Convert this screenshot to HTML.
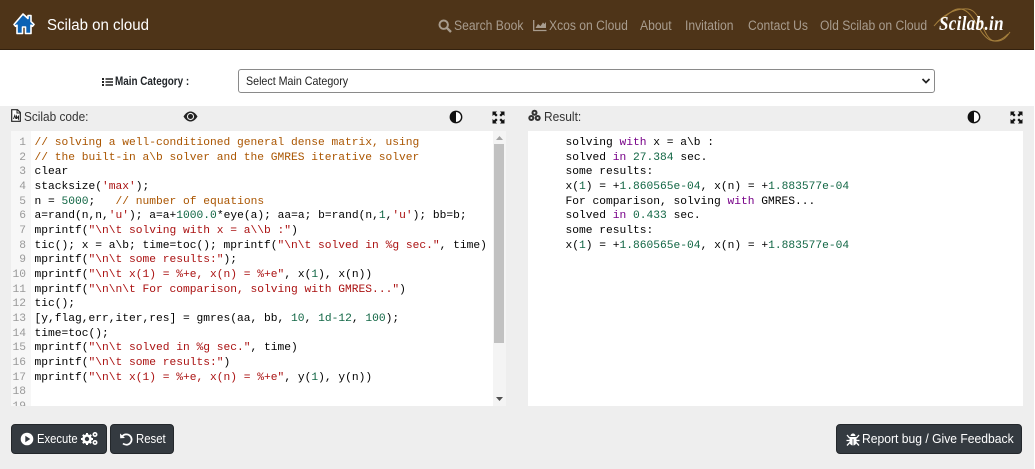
<!DOCTYPE html>
<html><head><meta charset="utf-8">
<style>
html,body{margin:0;padding:0;background:#fff}
body{width:1035px;height:469px;overflow:hidden;position:relative;font-family:"Liberation Sans",sans-serif}
.a{position:absolute;white-space:pre}
#hdr{left:0;top:0;width:1034px;height:49px;background:#4e3418;border-bottom:1px solid #33210e}
#bg{left:0;top:106px;width:1034px;height:363px;background:#eee}
.nav{top:18px;font-size:13.4px;line-height:16px;color:#a89c8e;transform:scaleX(.905);transform-origin:0 0}
.lbl{top:109px;font-size:13px;line-height:16px;color:#333;transform-origin:0 0}
.panel{top:131px;height:275px;background:#fff;overflow:hidden}
.code{font-family:"Liberation Mono",monospace;font-size:11.25px;line-height:14.67px;color:#000;margin:0}
.gut{color:#999;text-align:right}
.c{color:#a50}.s{color:#a11}.n{color:#164}.k{color:#708}
.btn{top:424px;height:30px;background:#343a40;border:1px solid #23272b;box-sizing:border-box;border-radius:4px;color:#fff;font-size:13px;line-height:28px}
svg{position:absolute;display:block}
</style></head><body>
<div class="a" id="hdr"></div>
<div class="a" id="bg"></div>

<svg style="left:11px;top:12px" width="24" height="24" viewBox="0 0 24 24"><path d="M12 2.5 L17 7V4h3v6l3 3-1.500 1.800-1.500-1.100V22h-5.500v-6.500h-3V22H6V13.700l-1.500 1.100L3 13Z" transform="translate(0 -.5)" fill="#0b62b4" stroke="#fff" stroke-width="1.600" stroke-linejoin="round"/></svg>
<div class="a" style="left:47px;top:16px;font-size:15.500px;line-height:19px;color:#fff;transform:scaleX(.97);transform-origin:0 0">Scilab on cloud</div>

<svg style="left:438px;top:19px" width="14" height="14" viewBox="0 0 14 14"><circle cx="5.700" cy="5.700" r="4.200" fill="none" stroke="#a89c8e" stroke-width="2"/><path d="M8.800 8.800 13 13" stroke="#a89c8e" stroke-width="2.400"/></svg>
<div class="a nav" style="left:454px">Search Book</div>
<svg style="left:533px;top:19px" width="14" height="13" viewBox="0 0 14 13"><path d="M.7 1v10.500H13.500" fill="none" stroke="#a89c8e" stroke-width="1.300"/><path d="M2.500 9 5 5l2.500 2L10 3.500 11.500 5 13 3v6Z" fill="#a89c8e"/></svg>
<div class="a nav" style="left:549px">Xcos on Cloud</div>
<div class="a nav" style="left:640px">About</div>
<div class="a nav" style="left:685px">Invitation</div>
<div class="a nav" style="left:748px">Contact Us</div>
<div class="a nav" style="left:820px">Old Scilab on Cloud</div>

<svg style="left:932px;top:0" width="84" height="46" viewBox="0 0 84 46"><path d="M2 26C10 16 22 8 36 9 50 11 50 38 62 41 70 42 74 38 78 32" fill="none" stroke="#a57f3c" stroke-width="1"/><path d="M11 19C18 12 23 8 29 9 42 11 46 34 58 40 66 43 72 38 76 34" fill="none" stroke="#a57f3c" stroke-width="1"/></svg>
<div class="a" style="left:939px;top:14px;font-family:'Liberation Serif',serif;font-style:italic;font-weight:bold;font-size:19.500px;line-height:22px;color:#fff;letter-spacing:.4px;transform:scaleX(.87);transform-origin:0 0">Scilab.in</div>

<svg style="left:102px;top:77px" width="11" height="10" viewBox="0 0 11 10"><path d="M0 1h2v2H0zM0 4h2v2H0zM0 7h2v2H0zM3.500 1.300H11v1.400H3.500zM3.500 4.300H11v1.400H3.500zM3.500 7.300H11v1.400H3.500z" fill="#222"/></svg>
<div class="a" style="left:115px;top:74px;font-size:11.500px;line-height:16px;font-weight:bold;color:#212529;transform:scaleX(.86);transform-origin:0 0">Main Category :</div>
<div class="a" style="left:238px;top:69px;width:697px;height:24px;box-sizing:border-box;border:1px solid #8a8a8a;border-radius:3px;background:#fff"></div>
<div class="a" style="left:245.500px;top:73px;font-size:12px;line-height:16px;color:#222;transform:scaleX(.89);transform-origin:0 0">Select Main Category</div>
<svg style="left:921px;top:77px" width="10" height="8" viewBox="0 0 10 8"><path d="M1.500 2 5 5.500 8.500 2" fill="none" stroke="#222" stroke-width="1.700"/></svg>

<svg style="left:11px;top:109px" width="10" height="13" viewBox="0 0 10 13"><path d="M.7.700H6.500L9.300 3.500V12.300H.7Z" fill="#fff" stroke="#222" stroke-width="1.200"/><path d="M6 1v3h3" fill="none" stroke="#222"/><path d="M2.500 10 3.800 6.500 5 10M5.500 10V7l2 3V6.500" fill="none" stroke="#222"/></svg>
<div class="a lbl" style="left:23.500px;transform:scaleX(.91)">Scilab code:</div>
<svg style="left:183px;top:111px" width="15" height="11" viewBox="0 0 15 11"><path d="M.5 5.500C3 1.500 5.500.5 7.500.5s4.500 1 7 5c-2.500 4-5 5-7 5s-4.500-1-7-5Z" fill="#222"/><circle cx="7.500" cy="5.500" r="3.600" fill="#eee"/><circle cx="7.500" cy="5.500" r="2.500" fill="#222"/></svg>
<svg style="left:449px;top:110px" width="14" height="14" viewBox="0 0 14 14"><circle cx="7" cy="7" r="5.700" fill="#fff" stroke="#111" stroke-width="1.400"/><path d="M7 1a6 6 0 0 0 0 12Z" fill="#111"/></svg>
<svg style="left:492px;top:111px" width="13" height="13" viewBox="0 0 13 13"><path fill="#111" d="M.5.500h4.500L3.600 2l2 2-1.600 1.600-2-2L.5 5zM12.500.500V5L11 3.600l-2 2L7.400 4l2-2L8 .500zM.5 12.500V8L2 9.400l2-2L5.600 9l-2 2L5 12.500zM12.500 12.500H8L9.400 11l-2-2L9 7.400l2 2L12.500 8z"/></svg>

<svg style="left:528px;top:109px" width="13" height="13" viewBox="0 0 13 13"><circle cx="6.500" cy="3.800" r="3" fill="#333"/><circle cx="3.300" cy="9" r="3" fill="#333"/><circle cx="9.700" cy="9" r="3" fill="#333"/><circle cx="6.500" cy="3.800" r="1" fill="#eee"/><circle cx="3.300" cy="9" r="1" fill="#eee"/><circle cx="9.700" cy="9" r="1" fill="#eee"/></svg>
<div class="a lbl" style="left:544px;transform:scaleX(.92)">Result:</div>
<svg style="left:967px;top:110px" width="14" height="14" viewBox="0 0 14 14"><circle cx="7" cy="7" r="5.700" fill="#fff" stroke="#111" stroke-width="1.400"/><path d="M7 1a6 6 0 0 0 0 12Z" fill="#111"/></svg>
<svg style="left:1010px;top:111px" width="13" height="13" viewBox="0 0 13 13"><path fill="#111" d="M.5.500h4.500L3.600 2l2 2-1.600 1.600-2-2L.5 5zM12.500.500V5L11 3.600l-2 2L7.400 4l2-2L8 .500zM.5 12.500V8L2 9.400l2-2L5.600 9l-2 2L5 12.500zM12.500 12.500H8L9.400 11l-2-2L9 7.400l2 2L12.500 8z"/></svg>

<div class="a panel" style="left:11px;width:495px">
<div class="a" style="left:0;top:0;width:20px;height:275px;background:#f7f7f7"></div>
<pre class="a code gut" style="left:0;top:5px;width:15px">1
2
3
4
5
6
7
8
9
10
11
12
13
14
15
16
17
18
19</pre>
<pre class="a code" style="left:23.500px;top:5px"><span class="c">// solving a well-conditioned general dense matrix, using</span>
<span class="c">// the built-in a\b solver and the GMRES iterative solver</span>
clear
stacksize(<span class="s">'max'</span>);
n = <span class="n">5000</span>;   <span class="c">// number of equations</span>
a=rand(n,n,<span class="s">'u'</span>); a=a+<span class="n">1000.0</span>*eye(a); aa=a; b=rand(n,<span class="n">1</span>,<span class="s">'u'</span>); bb=b;
mprintf(<span class="s">"\n\t solving with x = a\\b :"</span>)
tic(); x = a\b; time=toc(); mprintf(<span class="s">"\n\t solved in %g sec."</span>, time)
mprintf(<span class="s">"\n\t some results:"</span>);
mprintf(<span class="s">"\n\t x(1) = %+e, x(n) = %+e"</span>, x(<span class="n">1</span>), x(n))
mprintf(<span class="s">"\n\n\t For comparison, solving with GMRES..."</span>)
tic();
[y,flag,err,iter,res] = gmres(aa, bb, <span class="n">10</span>, <span class="n">1d-12</span>, <span class="n">100</span>);
time=toc();
mprintf(<span class="s">"\n\t solved in %g sec."</span>, time)
mprintf(<span class="s">"\n\t some results:"</span>)
mprintf(<span class="s">"\n\t x(1) = %+e, x(n) = %+e"</span>, y(<span class="n">1</span>), y(n))</pre>
<div class="a" style="left:482px;top:0;width:13px;height:275px;background:#f4f4f4"></div>
<div class="a" style="left:483px;top:13px;width:10px;height:199px;background:#c1c1c1"></div>
<svg style="left:485px;top:5px" width="7" height="4" viewBox="0 0 7 4"><path d="M3.500 0 7 4H0Z" fill="#a3a3a3"/></svg>
<svg style="left:485px;top:266px" width="7" height="4" viewBox="0 0 7 4"><path d="M0 0H7L3.500 4Z" fill="#505050"/></svg>
</div>

<div class="a panel" style="left:528px;width:495px">
<pre class="a code" style="left:37.500px;top:5px">solving <span class="k">with</span> x = a\b :
solved <span class="k">in</span> <span class="n">27.384</span> sec.
some results:
x(<span class="n">1</span>) = +<span class="n">1.860565e-04</span>, x(n) = +<span class="n">1.883577e-04</span>
For comparison, solving <span class="k">with</span> GMRES...
solved <span class="k">in</span> <span class="n">0.433</span> sec.
some results:
x(<span class="n">1</span>) = +<span class="n">1.860565e-04</span>, x(n) = +<span class="n">1.883577e-04</span></pre>
</div>

<div class="a btn" style="left:11px;width:96px"></div>
<svg style="left:20px;top:432px" width="14" height="14" viewBox="0 0 14 14"><circle cx="7" cy="7" r="6.300" fill="#fff"/><path d="M5.300 3.800 10.300 7 5.300 10.200Z" fill="#343a40"/></svg>
<div class="a" style="left:37px;top:431px;font-size:12.500px;line-height:16px;color:#fff;transform:scaleX(.9);transform-origin:0 0">Execute</div>
<svg style="left:81px;top:431px" width="17" height="15" viewBox="0 0 17 15"><circle cx="6" cy="8" r="3.500" fill="none" stroke="#fff" stroke-width="2.600"/><path d="M6 2v2M6 12v2M0 8h2M10 8h2M1.800 3.800l1.400 1.400M8.800 10.800l1.400 1.400M1.800 12.200l1.400-1.400M8.800 5.200l1.400-1.400" stroke="#fff" stroke-width="2"/><circle cx="14" cy="3.500" r="1.700" fill="none" stroke="#fff" stroke-width="1.600"/><circle cx="14" cy="11.500" r="1.700" fill="none" stroke="#fff" stroke-width="1.600"/></svg>

<div class="a btn" style="left:110px;width:64px"></div>
<svg style="left:119px;top:432px" width="14" height="14" viewBox="0 0 14 14"><path d="M3.200 4.500A5.200 5.200 0 1 1 4 11.500" fill="none" stroke="#fff" stroke-width="1.800"/><path d="M1 1.500 1.200 6.300 6 6Z" fill="#fff"/></svg>
<div class="a" style="left:135.500px;top:431px;font-size:12.500px;line-height:16px;color:#fff;transform:scaleX(.91);transform-origin:0 0">Reset</div>

<div class="a btn" style="left:836px;width:186px"></div>
<svg style="left:846px;top:432px" width="14" height="14" viewBox="0 0 14 14"><path d="M4.500 4a2.500 2.500 0 0 1 5 0Z" fill="#fff"/><path d="M3.500 5h7v5a3.500 3.500 0 0 1-7 0Z" fill="#fff"/><path d="M1 3l2.500 3M13 3l-2.500 3M.5 8.500h3M13.500 8.500h-3M1 13.500l2.800-3M13 13.500l-2.800-3" stroke="#fff" stroke-width="1.300"/><path d="M7 7v6.500" stroke="#343a40" stroke-width=".8"/></svg>
<div class="a" style="left:862px;top:431px;font-size:12.500px;line-height:16px;color:#fff;transform:scaleX(.97);transform-origin:0 0">Report bug / Give Feedback</div>
</body></html>
